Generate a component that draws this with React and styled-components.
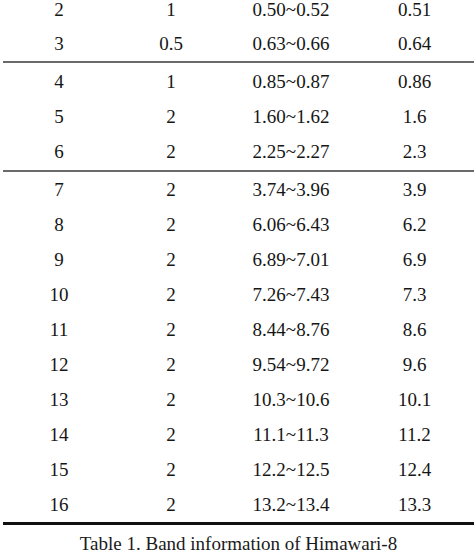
import React from 'react'
import styled, { createGlobalStyle } from 'styled-components'

const GlobalStyle = createGlobalStyle`
  html, body {
    margin: 0;
    padding: 0;
    background: #fff;
  }
  body {
    font-family: 'Liberation Serif', 'Times New Roman', serif;
    color: #161616;
    overflow: hidden;
  }
`

const Page = styled.div`
  width: 474px;
  height: 551px;
  overflow: hidden;
  padding-left: 3px;
  box-sizing: border-box;
`

const Table = styled.div`
  margin-top: -7px;
`

const Group = styled.div`
  padding: ${(p) => p.$pad || 0}px 0;
  border-bottom: ${(p) => (p.$last ? '3px solid #111' : '2px solid #6a6a6a')};
`

const Row = styled.div`
  display: grid;
  grid-template-columns: 112px 112px 128px 119px;
  height: ${(p) => p.$h}px;
  align-items: center;
  font-size: 19px;
`

const Cell = styled.div`
  text-align: center;
  white-space: nowrap;
`

const Caption = styled.div`
  margin-top: 8px;
  text-align: center;
  font-size: 19px;
  line-height: 22px;
  color: #1a1a1a;
`

const groups = [
  {
    h: 34,
    pad: 0,
    rows: [
      ['2', '1', '0.50~0.52', '0.51'],
      ['3', '0.5', '0.63~0.66', '0.64'],
    ],
  },
  {
    h: 35,
    pad: 1,
    rows: [
      ['4', '1', '0.85~0.87', '0.86'],
      ['5', '2', '1.60~1.62', '1.6'],
      ['6', '2', '2.25~2.27', '2.3'],
    ],
  },
  {
    h: 35,
    pad: 0,
    rows: [
      ['7', '2', '3.74~3.96', '3.9'],
      ['8', '2', '6.06~6.43', '6.2'],
      ['9', '2', '6.89~7.01', '6.9'],
      ['10', '2', '7.26~7.43', '7.3'],
      ['11', '2', '8.44~8.76', '8.6'],
      ['12', '2', '9.54~9.72', '9.6'],
      ['13', '2', '10.3~10.6', '10.1'],
      ['14', '2', '11.1~11.3', '11.2'],
      ['15', '2', '12.2~12.5', '12.4'],
      ['16', '2', '13.2~13.4', '13.3'],
    ],
  },
]

const App = () => {
  return (
    <Page>
      <GlobalStyle />
      <Table>
        {groups.map((g, gi) => (
          <Group key={gi} $pad={g.pad} $last={gi === groups.length - 1}>
            {g.rows.map((r) => (
              <Row key={r[0]} $h={g.h}>
                {r.map((c, ci) => (
                  <Cell key={ci}>{c}</Cell>
                ))}
              </Row>
            ))}
          </Group>
        ))}
      </Table>
      <Caption>Table 1. Band information of Himawari-8</Caption>
    </Page>
  )
}

export default App
